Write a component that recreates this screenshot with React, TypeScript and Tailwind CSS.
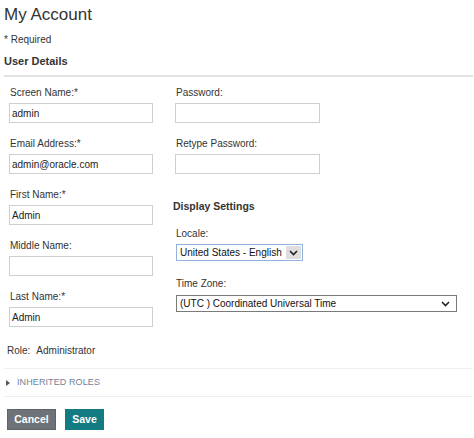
import React from "react";

function Field({ label, value, width = "w-[144px]" }: { label: string; value?: string; width?: string }) {
  return (
    <div className="mb-[15px]">
      <div className="text-[10px] leading-[12px] text-[#333] mb-[4px] pl-[1px]">{label}</div>
      <div className={`${width} h-[20px] border border-[#cfcfcf] bg-white flex items-center px-[2px] text-[10px] text-[#222]`}>
        {value}
      </div>
    </div>
  );
}

function Chevron({ className = "" }: { className?: string }) {
  return (
    <svg width="9" height="6" viewBox="0 0 9 6" className={className}>
      <path d="M1 1 L4.5 4.5 L8 1" fill="none" stroke="#222" strokeWidth="1.6" />
    </svg>
  );
}

export default function App() {
  return (
    <div
      className="w-[474px] h-[438px] bg-white text-[#333] pl-[4px] pr-[1px] overflow-hidden"
      style={{ fontFamily: '"Liberation Sans", Arial, sans-serif' }}
    >
      <div className="pt-[5px] text-[17px] leading-[20px] text-[#333]">My Account</div>
      <div className="mt-[9px] text-[10px] leading-[12px]">* Required</div>
      <div className="mt-[8px] text-[11px] leading-[14px] font-bold text-[#333]">User Details</div>
      <div className="mt-[7px] h-[2px] bg-[#e2e2e2]" />

      <div className="mt-[10px] grid grid-cols-[166px_1fr] pl-[5px]">
        <div>
          <Field label="Screen Name:*" value="admin" />
          <Field label="Email Address:*" value="admin@oracle.com" />
          <Field label="First Name:*" value="Admin" />
          <Field label="Middle Name:" />
          <div>
            <div className="text-[10px] leading-[12px] text-[#333] mb-[4px] pl-[1px]">Last Name:*</div>
            <div className="w-[144px] h-[20px] border border-[#cfcfcf] bg-white flex items-center px-[2px] text-[10px] text-[#222]">
              Admin
            </div>
          </div>
        </div>
        <div>
          <Field label="Password:" width="w-[145px]" />
          <div>
            <div className="text-[10px] leading-[12px] text-[#333] mb-[4px] pl-[1px]">Retype Password:</div>
            <div className="w-[145px] h-[20px] border border-[#cfcfcf] bg-white" />
          </div>
          <div className="mt-[25px] -ml-[2px] text-[10.5px] leading-[14px] font-bold text-[#333]">Display Settings</div>
          <div className="mt-[15px] text-[10px] leading-[12px] pl-[1px]">Locale:</div>
          <div className="mt-[4px] ml-[1px] w-[127px] h-[17px] border border-[#8fb3dc] bg-white flex items-center pl-[3px] pr-[1px] text-[10px] text-[#111]">
            <span className="flex-1">United States - English</span>
            <span className="w-[15px] h-[13px] bg-[#dedede] flex items-center justify-center">
              <Chevron />
            </span>
          </div>
          <div className="mt-[17px] text-[10px] leading-[12px] pl-[1px]">Time Zone:</div>
          <div className="mt-[5px] ml-[1px] w-[281px] h-[17px] border border-[#7a7a7a] bg-white flex items-center pl-[3px] pr-[6px] text-[10px] text-[#111]">
            <span className="flex-1">(UTC ) Coordinated Universal Time</span>
            <Chevron />
          </div>
        </div>
      </div>

      <div className="mt-[18px] pl-[3px] text-[10px] leading-[12px] text-[#333] flex">
        <span>Role:</span>
        <span className="ml-[6px]">Administrator</span>
      </div>
      <div className="mt-[11px] h-px bg-[#efefef]" />
      <div className="h-[27px] flex items-center pl-[2px]">
        <svg width="4" height="6" viewBox="0 0 4 6" className="mr-[7px]">
          <path d="M0 0 L4 3 L0 6 Z" fill="#555" />
        </svg>
        <span className="text-[9px] text-[#6f7f99] tracking-[0.1px]">INHERITED ROLES</span>
      </div>
      <div className="h-px bg-[#efefef]" />
      <div className="mt-[12px] pl-[3px] flex gap-[9px]">
        <div className="w-[49px] h-[21px] bg-[#6e7379] border border-[#5f6368] text-white font-bold text-[10.5px] flex items-center justify-center">
          Cancel
        </div>
        <div className="w-[39px] h-[21px] bg-[#137c83] text-white font-bold text-[10.5px] flex items-center justify-center">
          Save
        </div>
      </div>
    </div>
  );
}
